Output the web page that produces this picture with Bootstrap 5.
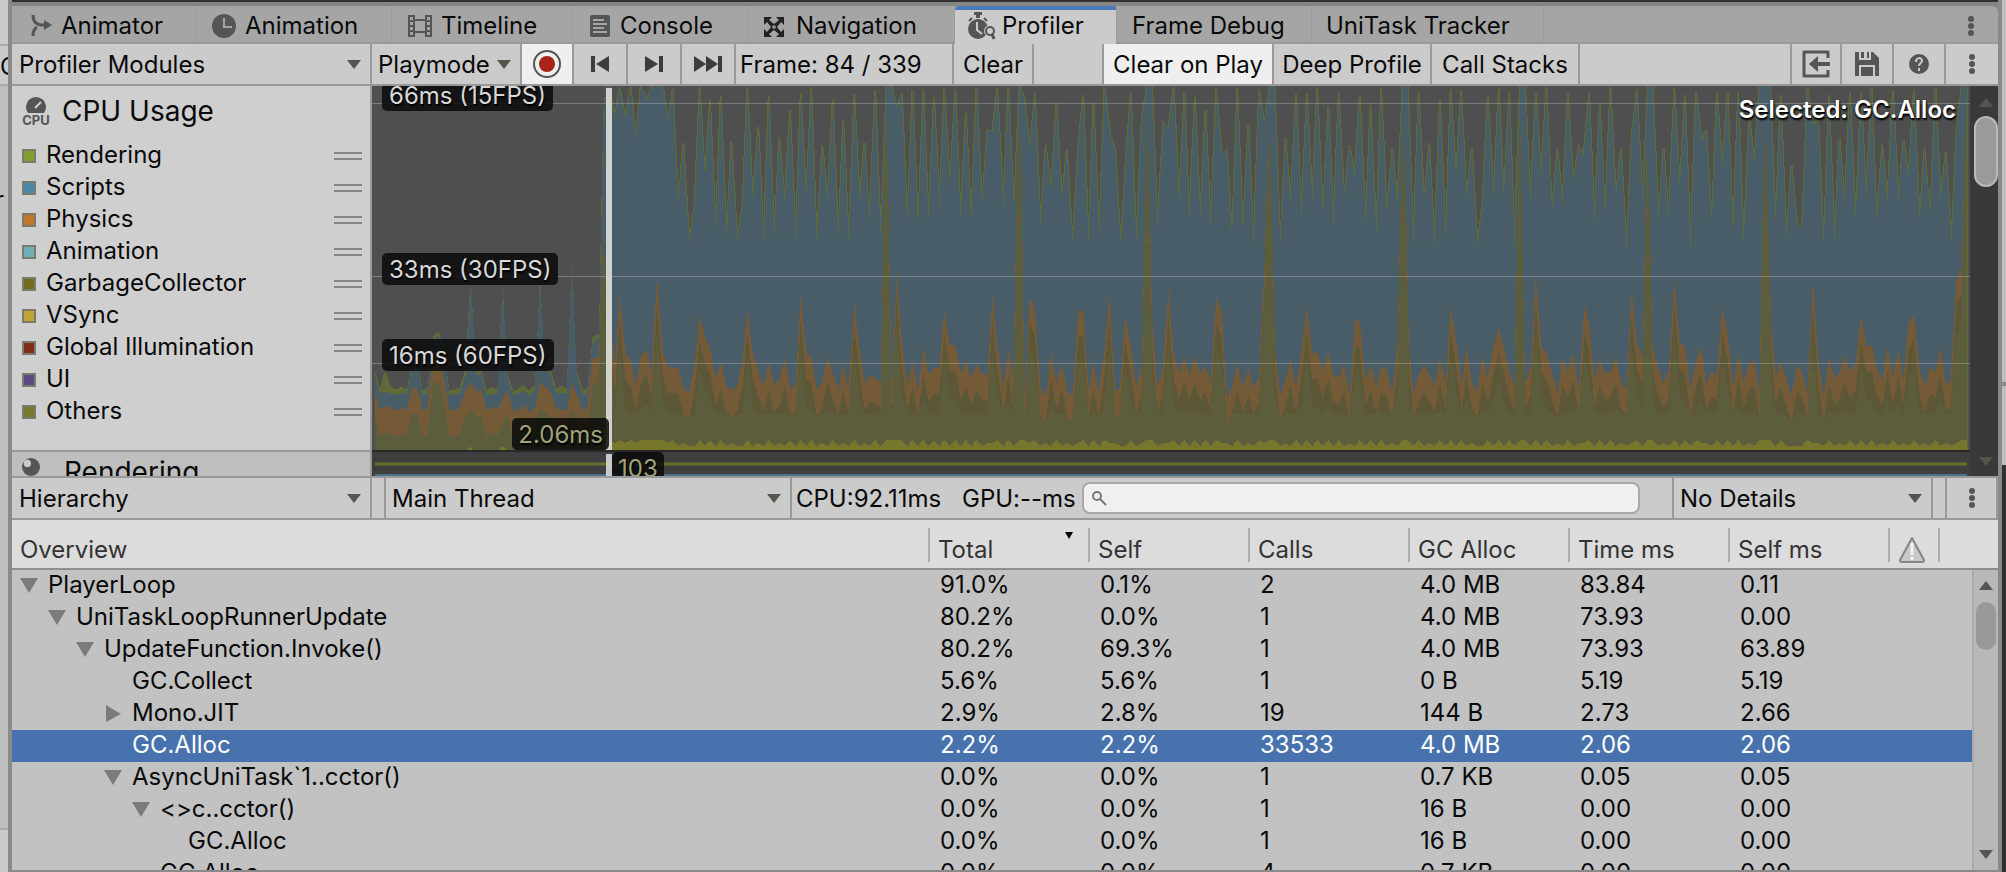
<!DOCTYPE html>
<html lang="en">
<head>
<meta charset="utf-8">
<meta name="viewport" content="width=device-width, initial-scale=1">
<title>Profiler</title>
<link rel="stylesheet" href="https://cdn.jsdelivr.net/npm/bootstrap@5.3.0/dist/css/bootstrap.min.css">
<style>
:root { --line:#999; --bar:#cbcbcb; --ink:#0a0a0a; --icon:#555; }
body { font:24px/32px Inter, "Liberation Sans", sans-serif; color:var(--ink); background:#8a8a8a; }
svg { display:block; flex:none; }
button, select, input { font:inherit; color:inherit; border:0; border-radius:0; }
.dock-left { width:8px; background:#bebebe; line-height:20px; }
.dock-right { width:4px; background:#bebebe; }
.edge { width:4px; background:#8a8a8a; }
.topline { height:6px; background:#858585; border-top:2px solid #303030; }
.tabbar { height:38px; background:#a5a5a5; border-bottom:2px solid var(--line); border-radius:0 6px 0 0; }
.tab { height:36px; padding:4px 0 0; background:none; text-align:left; white-space:nowrap; border-right:1px solid #9d9d9d; }
.tab svg { color:var(--icon); }
.tab.on { background:var(--bar); height:38px; border-top:4px solid #4a78be; border-radius:4px 4px 0 0; padding:0 0 2px; }
.toolrow { height:42px; background:var(--bar); border-bottom:2px solid var(--line); }
.toolrow > * { border-right:2px solid var(--line); flex:none; height:40px; }
.toolrow > .plain { border-right:0; }
.tool { background:var(--bar); padding:0; white-space:nowrap; display:flex; align-items:center; justify-content:center; color:#3c3c3c; }
.tool.word { color:var(--ink); padding-top:2px; }
.tool.lit { background:#efefef; }
.pick { appearance:none; background:var(--bar) url("data:image/svg+xml,%3Csvg xmlns='http://www.w3.org/2000/svg' width='14' height='9'%3E%3Cpath d='M0 0h14L7 9z' fill='%2354554d'/%3E%3C/svg%3E") no-repeat right 9px center; padding:2px 28px 0 7px; outline:0; }
.w-side { width:360px; }
.modules { background:#cfcfcf; height:390px; border-right:2px solid var(--line); }
.module-cpu { height:366px; border-bottom:2px solid var(--line); padding:5px 8px 0 18px; }
.module-title { font-size:28px; line-height:40px; gap:12px; margin-bottom:8px; }
.swatch { width:14px; height:14px; border:2px solid #7a7a6e; margin-right:10px; margin-top:2px; }
.grip { width:28px; height:8px; border:solid #858585; border-width:2px 0; margin-top:2px; }
.module-next { background:#bebebe; height:24px; padding:6px 10px; font-size:28px; line-height:40px; gap:24px; }
.graph { background:#4f4f4f; height:390px; }
.strip { height:26px; background:#3e3e3e; border-top:2px solid #282828; }
.tag { position:absolute; background:rgba(10,10,10,.86); color:#d8d8d8; border-radius:5px; padding:1px 7px 0; height:32px; white-space:nowrap; text-shadow:1px 2px 1px #000; line-height:32px; }
.tag.olive { color:#9fa27a; padding:1px 6px 0; }
.picked { position:absolute; right:14px; top:8px; color:#fff; font-weight:600; text-shadow:1px 2px 2px #000, 0 1px 2px #000; }
.vbar-dark { width:28px; background:#393939; padding:12px 0 10px 4px; }
.thumb-dark { width:24px; height:71px; border-radius:12px; background:#9a9a9a; border:2px solid #b9b9b9; margin-top:9px; }
.find { background:#f0f0f0; border:2px solid #a8a8a8; border-radius:8px; height:32px; width:100%; padding:0 8px 0 32px; outline:0; }
.readings { background:#c2c2c2; border-bottom:2px solid #8a8a8a; }
.readings table { table-layout:fixed; width:100%; border-collapse:separate; border-spacing:0; }
.readings th { height:50px; background:#dcdcdc; color:#333; font-weight:400; border-bottom:2px solid #8e8e8e; padding:12px 0 0 8px; position:relative; line-height:36px; }
.readings th + th::before { content:""; position:absolute; left:0; top:8px; width:2px; height:34px; background:#acacac; }
.readings th + th { padding-left:10px; }
.readings td { height:32px; padding:0 0 2px 12px; line-height:30px; white-space:nowrap; }
.readings td:first-child { padding-left:8px; }
.readings tr.sel { background:#4872ae; color:#fff; }
.fold { width:18px; height:15px; margin-right:10px; color:#7b7b7b; }
.vbar { position:absolute; right:0; top:50px; bottom:0; width:26px; background:#b8b8b8; border-left:2px solid #aaa; padding:11px 0; }
.thumb { width:20px; height:48px; border-radius:10px; background:#999; margin-top:12px; }
</style>
</head>
<body>
<div class="d-flex vh-100 overflow-hidden">
  <div class="dock-left overflow-hidden flex-shrink-0">
    <div style="height:44px;background:#cbcbcb"></div>
    <div style="height:42px;background:#cbcbcb;border:solid #aaa;border-width:2px 0;line-height:42px">C</div>
    <div class="d-flex justify-content-end pe-1" style="height:742px;padding-top:104px">r</div>
    <div style="height:44px;background:#cbcbcb;border-top:2px solid #aaa"></div>
  </div>
  <div class="edge flex-shrink-0"></div>

  <main class="d-flex flex-column flex-grow-1 overflow-hidden">
    <div class="topline flex-shrink-0"></div>
    <nav class="tabbar d-flex flex-shrink-0" id="tabs" aria-label="Windows">
      <button class="tab d-flex align-items-center" style="width:184px"><svg class="ms-3" width="33" height="26" viewBox="0 0 33 26" fill="none" stroke="currentColor" stroke-width="3"><path d="M5 2c0 7 4 10 9 10h5M5 23c0-3 1-7 4-9"/><path d="M16 7l8 5-8 5z" fill="currentColor" stroke="none"/></svg>Animator</button>
      <button class="tab d-flex align-items-center" style="width:196px"><svg style="margin:0 9px 0 16px" width="24" height="24" viewBox="0 0 24 24"><circle cx="12" cy="12" r="12" fill="currentColor"/><path d="M12 4v9h8" fill="none" stroke="#a5a5a5" stroke-width="2"/></svg>Animation</button>
      <button class="tab d-flex align-items-center" style="width:181px"><svg style="margin:0 9px 0 16px" width="24" height="22" viewBox="0 0 24 22"><path d="M0 0h7v4h10V0h7v22h-7v-4H7v4H0zM7 6v10h10V6z" fill="currentColor" fill-rule="evenodd"/><path d="M2 2h3v3H2zM2 7h3v3H2zM2 12h3v3H2zM2 17h3v3H2zM19 2h3v3h-3zM19 7h3v3h-3zM19 12h3v3h-3zM19 17h3v3h-3z" fill="#a5a5a5"/></svg>Timeline</button>
      <button class="tab d-flex align-items-center" style="width:175px"><svg style="margin:0 10px 0 17px" width="20" height="22" viewBox="0 0 20 22"><rect width="20" height="22" rx="2" fill="currentColor"/><path d="M3 5h11M3 9h14M3 13h11M3 17h14" stroke="#a5a5a5" stroke-width="2"/></svg>Console</button>
      <button class="tab d-flex align-items-center" style="width:207px"><svg style="margin:2px 12px 0 16px" width="20" height="20" viewBox="0 0 20 20" fill="#222"><path d="M0 0h8L5 3l5 4 5-4-3-3h8v8l-3-3-4 5 4 5 3-3v8h-8l3-3-5-4-5 4 3 3H0v-8l3 3 4-5-4-5-3 3z"/><circle cx="10" cy="10" r="2" fill="#888"/></svg>Navigation</button>
      <button class="tab on d-flex align-items-center" style="width:162px" aria-current="page"><svg style="margin:0 6px 0 13px" width="28" height="28" viewBox="0 0 28 28"><path d="M6 0h8v3h-2v3h-4V3H6z" fill="currentColor"/><circle cx="10" cy="17" r="10" fill="currentColor"/><path d="M1 9l3-3M16 6l3 3" stroke="currentColor" stroke-width="2"/><path d="M9 10v8l5 4" fill="none" stroke="#cbcbcb" stroke-width="2"/><circle cx="22" cy="19" r="6" fill="#cbcbcb"/><circle cx="22" cy="19" r="4" fill="none" stroke="currentColor" stroke-width="2"/><path d="M24 22l2 5" stroke="currentColor" stroke-width="3"/></svg>Profiler</button>
      <button class="tab" style="width:195px;padding-left:15px">Frame Debug</button>
      <button class="tab" style="width:232px;padding-left:14px">UniTask Tracker</button>
      <button class="tab border-0 ms-auto me-3 px-2" aria-label="Window menu"><svg width="6" height="20" viewBox="0 0 6 20"><g fill="currentColor"><circle cx="3" cy="3" r="3"/><circle cx="3" cy="10" r="3"/><circle cx="3" cy="17" r="3"/></g></svg></button>
    </nav>

    <div class="toolrow d-flex flex-shrink-0">
      <select class="pick w-side" aria-label="Profiler modules"><option>Profiler Modules</option></select>
      <select class="pick" style="width:150px;padding-left:6px" aria-label="Target"><option>Playmode</option></select>
      <button class="tool lit" style="width:52px" aria-label="Record"><svg width="28" height="28" viewBox="0 0 28 28"><circle cx="14" cy="14" r="13" fill="none" stroke="#555" stroke-width="2"/><circle cx="14" cy="14" r="8" fill="#a82318"/></svg></button>
      <button class="tool" style="width:54px" aria-label="Previous frame"><svg width="18" height="16" viewBox="0 0 18 16" fill="currentColor"><path d="M0 0h4v16H0zM18 0v16L5 8z"/></svg></button>
      <button class="tool" style="width:54px" aria-label="Next frame"><svg width="18" height="16" viewBox="0 0 18 16" fill="currentColor"><path d="M14 0h4v16h-4zM0 0l13 8L0 16z"/></svg></button>
      <button class="tool" style="width:54px" aria-label="Last frame"><svg width="28" height="16" viewBox="0 0 28 16" fill="currentColor"><path d="M0 0l12 8L0 16zM12 0l12 8-12 8zM24 0h4v16h-4z"/></svg></button>
      <div class="tool word justify-content-start" style="width:218px;padding-left:4px">Frame: 84 / 339</div>
      <button class="tool word" style="width:80px">Clear</button>
      <div style="width:70px"></div>
      <button class="tool word lit" style="width:170px" aria-pressed="true">Clear on Play</button>
      <button class="tool word" style="width:158px">Deep Profile</button>
      <button class="tool word" style="width:148px">Call Stacks</button>
      <div class="flex-fill"></div>
      <button class="tool" style="width:50px;color:#555" aria-label="Load"><svg width="28" height="28" viewBox="0 0 28 28"><path d="M26 8V2H2v24h24v-6" fill="none" stroke="currentColor" stroke-width="3" stroke-linejoin="round"/><path d="M7 14l9-8v6h12v4H16v6z" fill="currentColor"/></svg></button>
      <button class="tool" style="width:52px;color:#555" aria-label="Save"><svg width="24" height="24" viewBox="0 0 24 24"><path d="M0 0h4v8h12V0h2l6 6v18h-4V13H4v11H0zM6 0h3v6H6zM12 0h2v6h-2zM6 15h12v9H6z" fill="currentColor"/></svg></button>
      <button class="tool" style="width:52px;color:#555" aria-label="Help"><svg width="20" height="20" viewBox="0 0 20 20"><circle cx="10" cy="10" r="10" fill="currentColor"/><path d="M7 8c0-5 6-5 6-1 0 2-3 2-3 5M10 14v3" fill="none" stroke="#cbcbcb" stroke-width="2"/></svg></button>
      <button class="tool plain" style="width:52px;color:#555" aria-label="Profiler menu"><svg width="6" height="20" viewBox="0 0 6 20"><g fill="currentColor"><circle cx="3" cy="3" r="3"/><circle cx="3" cy="10" r="3"/><circle cx="3" cy="17" r="3"/></g></svg></button>
    </div>

    <section class="d-flex flex-shrink-0">
      <aside class="modules w-side flex-shrink-0 overflow-hidden">
        <div class="module-cpu">
          <div class="module-title d-flex align-items-center" style="margin-left:-8px"><svg width="28" height="28" viewBox="0 0 28 28"><path d="M6 16a10 10 0 1 1 16 0z" fill="#555"/><path d="M13 11l6-6" stroke="#cfcfcf" stroke-width="2"/><text x="14" y="28" text-anchor="middle" font-family="Inter, sans-serif" font-size="13" font-weight="700" fill="#555">CPU</text></svg>CPU Usage</div>
          <div id="legend" style="margin-left:-8px"></div>
        </div>
        <div class="module-next d-flex align-items-start"><svg width="18" height="18" viewBox="0 0 20 20"><circle cx="10" cy="10" r="10" fill="#555"/><circle cx="6" cy="6" r="4" fill="#ccc"/></svg><span style="margin-top:-6px">Rendering</span></div>
      </aside>
      <div class="graph position-relative flex-fill overflow-hidden">
        <svg id="chart" width="100%" height="364" viewBox="0 0 1598 364" preserveAspectRatio="none"></svg>
        <div class="strip"><svg width="100%" height="24" viewBox="0 0 1598 24" preserveAspectRatio="none"><path d="M3 12h1592" stroke="#555b2c" stroke-width="4"/><path d="M3 12h1592" stroke="#76802c"/><path d="M3 23h1592" stroke="#49718a" stroke-width="2"/><path d="M234 2h6v22h-6z" fill="#c9c9c9"/></svg></div>
        <span class="tag" style="left:10px;top:-7px">66ms (15FPS)</span>
        <span class="tag" style="left:10px;top:167px">33ms (30FPS)</span>
        <span class="tag" style="left:10px;top:253px">16ms (60FPS)</span>
        <span class="tag olive" style="right:85.17%;top:332px">2.06ms</span>
        <span class="tag olive" style="left:15.02%;top:366px">103</span>
        <div class="picked">Selected: GC.Alloc</div>
      </div>
      <div class="vbar-dark d-flex flex-column flex-shrink-0">
        <svg class="mx-auto" width="14" height="9" viewBox="0 0 14 9"><path d="M0 9h14L7 0z" fill="#54554d"/></svg>
        <div class="thumb-dark"></div>
        <svg class="mx-auto mt-auto" width="14" height="9" viewBox="0 0 14 9"><path d="M0 0h14L7 9z" fill="#54554d"/></svg>
      </div>
    </section>

    <div class="toolrow d-flex flex-shrink-0" style="border-top:2px solid var(--line);height:44px">
      <select class="pick w-side" aria-label="View"><option>Hierarchy</option></select>
      <div style="width:14px"></div>
      <select class="pick" style="width:406px;padding-left:6px" aria-label="Thread"><option>Main Thread</option></select>
      <div class="plain d-flex align-items-center" style="padding:2px 0 0 4px;width:290px"><span style="width:166px">CPU:92.11ms</span><span>GPU:--ms</span></div>
      <div class="plain d-flex align-items-center flex-fill position-relative" style="margin-right:32px"><input class="find" type="text" aria-label="Search"><svg class="position-absolute" style="left:9px" width="16" height="16" viewBox="0 0 16 16" fill="none" stroke="#777" stroke-width="2"><circle cx="6" cy="6" r="4"/><path d="M9 9l6 6"/></svg></div>
      <select class="pick" style="width:261px;border-left:2px solid var(--line);padding-left:6px" aria-label="Details"><option>No Details</option></select>
      <div style="width:14px"></div>
      <button class="tool" style="width:51px;color:#555" aria-label="View menu"><svg width="6" height="20" viewBox="0 0 6 20"><g fill="currentColor"><circle cx="3" cy="3" r="3"/><circle cx="3" cy="10" r="3"/><circle cx="3" cy="17" r="3"/></g></svg></button>
    </div>

    <section class="readings position-relative flex-fill overflow-hidden">
      <table>
        <colgroup><col><col style="width:160px"><col style="width:160px"><col style="width:160px"><col style="width:160px"><col style="width:160px"><col style="width:160px"><col style="width:50px"><col style="width:60px"></colgroup>
        <thead><tr><th>Overview</th><th>Total<svg class="position-absolute" style="right:15px;top:12px" width="8" height="7" viewBox="0 0 8 7"><path d="M0 0h8L4 7z"/></svg></th><th>Self</th><th>Calls</th><th>GC Alloc</th><th>Time ms</th><th>Self ms</th><th aria-label="Warnings"><svg width="28" height="28" viewBox="0 0 28 28"><path d="M14 2L26 24q0 2-2 2H4q-2 0-2-2z" fill="#c8c8c8" stroke="#858585" stroke-width="2" stroke-linejoin="round"/><path d="M14 7v12M14 21v3" stroke="#f4f4f4" stroke-width="3"/></svg></th><th></th></tr></thead>
        <tbody id="rows"></tbody>
      </table>
      <div class="vbar d-flex flex-column align-items-center">
        <svg width="14" height="9" viewBox="0 0 14 9"><path d="M0 9h14L7 0z" fill="#54554d"/></svg>
        <div class="thumb"></div>
        <svg class="mt-auto" width="14" height="9" viewBox="0 0 14 9"><path d="M0 0h14L7 9z" fill="#54554d"/></svg>
      </div>
    </section>
  </main>
  <div class="edge flex-shrink-0"></div>
  <div class="dock-right flex-shrink-0"><div style="height:382px"></div><div style="height:83px;border-top:4px solid #8a8a8a"></div><div style="height:407px;background:#303030"></div></div>
</div>

<script src="https://cdn.jsdelivr.net/npm/bootstrap@5.3.0/dist/js/bootstrap.bundle.min.js"></script>
<script>
const legend = [['Rendering','#849f2e'],['Scripts','#4c88a8'],['Physics','#c2752b'],['Animation','#6fafba'],['GarbageCollector','#726a1f'],['VSync','#c2a436'],['Global Illumination','#822d17'],['UI','#5e4a83'],['Others','#7a7a2e']];
document.getElementById('legend').innerHTML = legend.map(([n,c]) =>
  `<div class="d-flex align-items-center"><span class="swatch" style="background:${c}"></span>${n}<span class="grip ms-auto"></span></div>`).join('');

// depth, fold state (1 open, 2 closed, 0 leaf), name, values
const rows = [
  [0,1,'PlayerLoop','91.0%','0.1%','2','4.0 MB','83.84','0.11'],
  [1,1,'UniTaskLoopRunnerUpdate','80.2%','0.0%','1','4.0 MB','73.93','0.00'],
  [2,1,'UpdateFunction.Invoke()','80.2%','69.3%','1','4.0 MB','73.93','63.89'],
  [3,0,'GC.Collect','5.6%','5.6%','1','0 B','5.19','5.19'],
  [3,2,'Mono.JIT','2.9%','2.8%','19','144 B','2.73','2.66'],
  [3,0,'GC.Alloc','2.2%','2.2%','33533','4.0 MB','2.06','2.06',1],
  [3,1,'AsyncUniTask`1..cctor()','0.0%','0.0%','1','0.7 KB','0.05','0.05'],
  [4,1,'&lt;&gt;c..cctor()','0.0%','0.0%','1','16 B','0.00','0.00'],
  [5,0,'GC.Alloc','0.0%','0.0%','1','16 B','0.00','0.00'],
  [4,0,'GC.Alloc','0.0%','0.0%','4','0.7 KB','0.00','0.00']];
const fold = ['', '<path d="M0 0h18L9 15z" fill="currentColor"/>', '<path d="M2-1v17L17 8z" fill="currentColor"/>'];
document.getElementById('rows').innerHTML = rows.map(r =>
  `<tr class="${r[9] ? 'sel' : ''}"><td><div class="d-flex align-items-center" style="margin-left:${r[0] * 28}px"><svg class="fold" viewBox="0 0 18 15" overflow="visible">${fold[r[1]]}</svg>${r[2]}</div></td>${r.slice(3, 9).map(v => `<td>${v}</td>`).join('')}<td></td><td></td></tr>`).join('');

// Frame samples, stored per capture block: [offset, units per pixel, "x,y ..."]
const read = blocks => blocks.flatMap(([o, s, t]) => t.split(' ').map(p => { const [x, y] = p.split(',').map(Number); return [x / s + o, y / 3 - 6]; }));
const A = -2, B = 488, C = 1058, SA = 3, SB = 2.7034, SC = 2.7222;
const startTotal = read([[A,SA,'15,872 30,925 45,870 62,920 78,928 95,920 110,928 125,860 145,860 158,930 172,925 190,770 205,753 222,800 238,932 268,925 285,870 302,590 318,875 335,870 350,930 365,922 382,928 398,610 412,880 430,935 460,915 478,932 495,915 510,590 525,860 542,870 558,925 575,918 590,925 605,550 620,870 638,930 652,925 668,770 687,760 692,465 700,100 706,18']]);
const scripts = read([
[A,SA,'15,885 30,940 45,935 80,945 95,938 110,945 125,870 145,870 158,945 172,940 190,780 205,765 222,810 238,945 270,940 287,885 302,595 318,885 335,880 350,945 382,940 398,620 412,890 430,948 460,932 478,945 495,930 510,600 525,870 542,885 558,940 590,938 605,555 620,880 638,945 652,940 668,790 687,775 700,150 706,18 718,18 735,110 748,22 766,112 782,22 797,180 812,22 830,60 845,18 878,18 893,120 908,28 925,375 940,190 958,488 974,370 989,22 1005,295 1020,60 1037,455 1052,48 1070,480 1084,185 1102,480 1118,370 1132,22 1148,360 1165,140 1181,492 1196,48 1213,480 1228,170 1244,365 1260,90 1277,488 1292,40 1309,355 1324,20 1340,488 1357,195 1373,360 1388,60 1405,480 1420,120 1436,482 1453,42 1469,370 1484,190'],
[B,SB,'0,340 12,190 26,420 41,30 56,470 72,18 85,18 98,88 113,40 128,430 142,30 157,452 171,30 185,415 200,50 215,375 228,25 243,320 258,30 272,412 286,100 301,425 315,25 330,375 345,150 358,155 371,25 388,380 401,20 416,395 431,18 445,55 459,210 473,40 488,438 502,195 517,335 531,68 546,360 559,210 575,495 590,200 603,45 618,492 631,68 647,472 661,20 676,160 690,210 705,500 719,230 732,40 747,485 762,110 776,18 790,18 804,440 820,130 834,145 848,20 863,372 877,35 890,425 905,52 920,412 934,90 948,445 963,25 978,225 992,210 1006,472 1020,25 1035,460 1050,135 1064,498 1079,28 1093,135 1107,18 1121,18 1136,502 1150,175 1164,365 1179,42 1193,415 1208,42 1223,360 1236,20 1251,412 1266,78 1280,432 1294,40 1309,355 1323,195 1337,285 1351,45 1367,435 1380,75 1396,460 1409,25 1424,400 1439,205 1453,370 1467,18 1481,18 1496,500 1510,35 1525,360 1539,190 1553,495'],
[C,SC,'27,60 43,485 56,28 71,290 85,30 99,355 114,200 129,498 143,370 157,45 173,350 187,25 201,350 216,40 230,490 245,18 259,18 273,365 288,40 303,290 317,20 332,395 347,205 361,375 375,38 390,305 405,200 418,225 433,40 448,430 462,72 477,412 491,22 506,345 520,205 535,502 549,170 563,30 579,370 593,18 606,18 622,415 636,205 650,412 665,25 680,320 694,45 709,497 724,35 740,185 752,150 767,430 781,40 796,260 810,38 825,475 839,35 854,487 869,110 883,250 897,18 926,18 941,432 955,45 970,480 984,255 1000,435 1013,440 1028,22 1043,135 1057,120 1072,500 1086,45 1101,475 1115,175 1129,375 1143,40 1159,420 1173,40 1188,355 1202,20 1216,425 1231,195 1245,365 1260,30 1275,360 1289,180 1303,290 1317,30 1333,422 1346,205 1361,415 1376,25 1390,355 1404,215 1420,485 1433,160 1448,18 1462,18']]);
const physics = read([
[A,SA,'15,940 30,988 50,978 80,993 95,980 110,993 125,925 142,925 158,990 172,988 190,830 210,830 238,988 252,993 270,980 285,935 302,908 320,935 335,930 350,992 368,980 382,990 412,928 430,993 445,992 460,975 478,995 495,980 510,905 542,938 558,985 590,992 605,905 638,993 652,980 668,835 687,830 700,460 712,700 722,740 735,860 749,640 766,820 782,840 797,915 812,830 830,808 845,880 861,590 878,810 893,860 925,865 942,928 958,935 974,850 989,705 1005,770 1020,805 1037,895 1052,850 1070,920 1086,930 1102,915 1118,840 1132,685 1148,820 1165,870 1181,918 1196,850 1213,915 1228,900 1244,835 1262,930 1277,912 1292,645 1309,820 1324,830 1340,928 1357,905 1373,830 1405,930 1420,850 1436,930 1453,665 1469,810 1484,910'],
[B,SB,'0,825 12,912 26,885 56,905 66,300 71,90 76,300 86,950 99,575 113,780 128,915 142,845 157,930 171,800 185,882 200,865 215,860 228,690 243,795 258,795 272,880 286,845 301,895 315,852 330,882 345,885 358,645 371,790 388,920 401,805 414,905 425,300 430,60 437,300 445,950 459,650 473,690 488,925 502,950 517,815 531,910 546,850 560,935 575,945 590,695 603,688 618,930 631,850 645,935 661,810 674,640 690,935 703,925 717,710 732,800 747,920 762,860 772,300 777,80 784,400 790,720 804,920 818,870 834,630 848,820 863,880 877,825 890,885 905,830 920,880 934,855 948,910 963,650 978,700 992,955 1006,920 1020,850 1035,920 1050,865 1064,925 1079,890 1093,570 1105,130 1115,450 1122,800 1136,945 1150,900 1164,840 1179,920 1193,820 1208,675 1223,820 1236,815 1251,875 1266,815 1280,885 1294,895 1309,852 1323,945 1339,720 1351,725 1367,900 1380,852 1396,918 1409,858 1424,870 1439,935 1453,790 1463,300 1469,120 1478,450 1484,790 1496,940 1510,885 1525,855 1539,885 1553,915'],
[C,SC,'27,835 43,905 56,680 71,780 87,915 99,800 114,905 129,935 143,830 157,890 173,800 187,745 201,800 216,870 230,915 240,300 245,70 251,450 259,910 275,860 288,585 303,800 317,820 332,880 347,935 361,835 375,875 390,820 405,930 420,680 433,730 448,900 462,840 477,882 491,875 506,828 520,905 535,930 549,630 563,790 579,830 590,200 597,350 606,800 620,860 636,910 650,870 665,598 680,790 694,800 709,925 724,840 738,800 752,910 767,875 781,885 796,685 810,760 825,920 839,820 854,905 869,850 883,840 897,930 907,300 913,130 921,450 930,750 941,890 955,845 984,945 1000,850 1013,880 1028,935 1042,598 1057,840 1072,945 1086,832 1101,895 1115,880 1129,825 1143,875 1159,850 1173,705 1188,800 1202,795 1216,865 1231,900 1245,800 1260,890 1275,812 1289,895 1303,730 1317,705 1333,870 1347,920 1361,860 1376,875 1390,800 1404,915 1418,900 1433,600 1448,560 1455,250 1460,100 1462,100']]);
const collector = physics.map(([x, y]) => [x, y < 160 ? y : y + 26]);
const others = physics.map(([x, y], i) => [x, x < 236 || y < 160 ? collector[i][1] : Math.max(collector[i][1], Math.min(328, y + 54))]);
const late = scripts.filter(p => p[0] > 236);
const frames = [[3, 364], [94, 364], [98, 361], [102, 364], [126, 364], [130, 360], [134, 364], [225, 364], [232, 338], [237, 354]].concat(late.map(([x, y]) => [x, y < 30 ? 354 : y < 70 ? 357 : 360]));
const area = (pts, fill, extra = '') => `<polygon fill="${fill}" ${extra} points="${pts[0][0]},366 ${pts.map(p => p.map(v => v.toFixed(1)).join()).join(' ')} ${pts[pts.length - 1][0]},366"/>`;
document.getElementById('chart').innerHTML = '<g shape-rendering="crispEdges">' +
  area(startTotal, '#5f6b37') +
  area(late, '#495d69', 'stroke="#5f6b35" stroke-width="2"') +
  area(scripts, '#495d69') + area(physics, '#745a36') + area(collector, '#5b5737') + area(others, '#5c5d3d') + area(frames, '#76772c') +
  '</g><path d="M0 17.5H1598M0 190.5H1598M0 277.5H1598" stroke="#fff" stroke-opacity=".25"/><path d="M234 2h6v362h-6z" fill="#dcdcd8" fill-opacity=".92"/>';
</script>
</body>
</html>
